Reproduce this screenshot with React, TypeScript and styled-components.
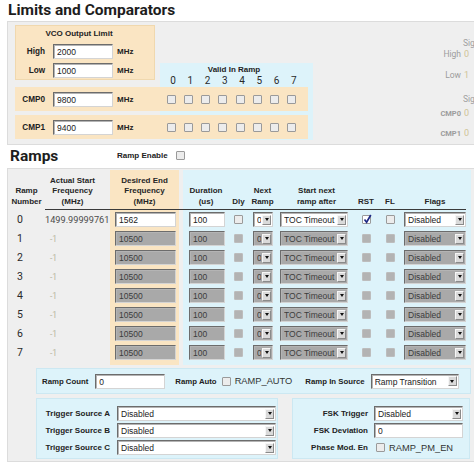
import React from "react";
import styled, { createGlobalStyle } from "styled-components";

type Tone = "tan" | "blue";

const TAN = "#fae5c3";
const BLUE = "#ddf3fa";
const PANEL = "#efefef";

const toneBg = (t?: Tone) => (t === "tan" ? TAN : t === "blue" ? BLUE : "transparent");

const GlobalStyle = createGlobalStyle`
  html, body {
    margin: 0;
    padding: 0;
    overflow: hidden;
    background: #ffffff;
  }
  body {
    font-family: "Liberation Sans", Arial, sans-serif;
    color: #222;
  }
  *, *::before, *::after {
    box-sizing: border-box;
  }
`;

const Page = styled.div`
  width: 474px;
  overflow: hidden;
`;

const SectionTitle = styled.h2<{ $w?: number; $left?: number }>`
  margin: 0;
  padding-left: ${p => p.$left ?? 8}px;
  width: ${p => (p.$w ? `${p.$w}px` : "auto")};
  font-family: Roboto, "Liberation Sans", sans-serif;
  font-weight: 700;
  font-size: 15.5px;
  line-height: 20px;
  color: #1d1d1d;
`;

const Panel = styled.div<{ $top: number }>`
  margin: ${p => p.$top}px 0 0 7px;
  background: ${PANEL};
  border: 1px solid #dcdcdc;
  border-right: none;
`;

const LimitsBody = styled.div`
  display: flex;
  align-items: flex-start;
  padding: 3px 0 4px 7px;
`;

const LeftColumn = styled.div`
  display: flex;
  flex-direction: column;
  width: 145px;
`;

const VcoBox = styled.div`
  width: 140px;
  background: ${TAN};
  border: 1px solid #f0d8ae;
  padding: 3px 0 1px;
  margin-bottom: 7px;
`;

const BoxTitle = styled.div<{ $shift?: number }>`
  font-size: 8px;
  line-height: 10px;
  font-weight: 700;
  text-align: center;
  padding-right: ${p => p.$shift ?? 0}px;
  color: #222;
`;

const FieldRow = styled.div<{ $top?: number }>`
  display: flex;
  align-items: center;
  height: 15px;
  margin-top: ${p => p.$top ?? 0}px;
`;

const FieldLabel = styled.span`
  width: 29px;
  margin-right: 8px;
  text-align: right;
  font-size: 8.2px;
  font-weight: 700;
  color: #222;
  white-space: nowrap;
`;

const Unit = styled.span`
  margin-left: 4px;
  font-size: 8px;
  font-weight: 700;
  color: #222;
`;

const Strip = styled.div<{ $top?: number }>`
  display: flex;
  align-items: center;
  height: 24px;
  margin-top: ${p => p.$top ?? 0}px;
  padding-left: 1px;
  background: ${TAN};
`;

const ValidBox = styled.div`
  margin-top: 38px;
  width: 153px;
  background: ${BLUE};
  padding: 2px 5px 1px 0;
`;

const RampGrid = styled.div<{ $top?: number; $shift?: number }>`
  display: grid;
  grid-template-columns: repeat(8, 17.25px);
  justify-items: center;
  align-items: center;
  margin-top: ${p => p.$top ?? 0}px;
  padding-left: ${p => 2.5 + (p.$shift ?? 0)}px;
`;

const DigitRow = styled(RampGrid)`
  height: 12px;
  font-family: Roboto, "Liberation Sans", sans-serif;
  font-size: 10px;
  line-height: 12px;
  color: #2a2a2a;
`;

const CheckStrip = styled(RampGrid)`
  height: 24px;
  background: ${TAN};
`;

const SigBlock = styled.div`
  margin: 13px 0 0 auto;
  width: 37px;
  display: flex;
  flex-direction: column;
  font-family: Roboto, "Liberation Sans", sans-serif;
`;

const SigHead = styled.div<{ $top?: number }>`
  margin-top: ${p => p.$top ?? 0}px;
  padding-left: 26px;
  font-size: 8.5px;
  line-height: 10px;
  color: #a0a0a0;
  white-space: nowrap;
`;

const SigRow = styled.div<{ $top?: number }>`
  display: flex;
  align-items: baseline;
  margin-top: ${p => p.$top ?? 0}px;
  line-height: 10px;
`;

const SigLabel = styled.span<{ $bold?: boolean }>`
  width: 24px;
  flex: none;
  text-align: right;
  font-size: ${p => (p.$bold ? 7.5 : 8.5)}px;
  font-weight: ${p => (p.$bold ? 700 : 400)};
  color: #9c9c9c;
  white-space: nowrap;
`;

const SigValue = styled.span`
  margin-left: 3px;
  font-size: 9px;
  color: #cfc497;
`;

/* ramps */

const RampsHeader = styled.div`
  display: flex;
  align-items: center;
  height: 21px;
`;

const InlineLabel = styled.span<{ $left?: number; $size?: number }>`
  margin-left: ${p => p.$left ?? 0}px;
  font-size: ${p => p.$size ?? 8}px;
  font-weight: 700;
  color: #222;
  white-space: nowrap;
`;

const RampsBody = styled.div`
  padding: 1px 0 2px 0;
`;

const RampTable = styled.table`
  border-collapse: separate;
  border-spacing: 0;
  table-layout: fixed;
  width: 463px;
`;

const Col = styled.col<{ $w: number }>`
  width: ${p => p.$w}px;
`;

const HeadRow = styled.tr`
  height: 40px;
`;

const BodyRow = styled.tr<{ $h?: number }>`
  height: ${p => p.$h ?? 19}px;
`;

const HeadCell = styled.th<{ $tone?: Tone; $line?: boolean; $padRight?: number }>`
  padding: 0 ${p => p.$padRight ?? 0}px 2px 0;
  vertical-align: bottom;
  text-align: center;
  font-size: 8px;
  line-height: 10.5px;
  font-weight: 700;
  color: #262626;
  background: ${p => toneBg(p.$tone)};
  border-bottom: 1px solid ${p => (p.$line ? "#3a3a3a" : "transparent")};
`;

const Cell = styled.td<{ $tone?: Tone }>`
  padding: 0;
  vertical-align: middle;
  background: ${p => toneBg(p.$tone)};
  white-space: nowrap;
`;

const RowNumber = styled.span`
  display: block;
  padding-left: 9px;
  font-family: Roboto, "Liberation Sans", sans-serif;
  font-size: 10.5px;
  color: #2a2a2a;
`;

const StartFreq = styled.span<{ $muted?: boolean }>`
  display: block;
  padding-left: ${p => (p.$muted ? 5 : 0)}px;
  font-family: Roboto, "Liberation Sans", sans-serif;
  font-size: ${p => (p.$muted ? 8.5 : 9.2)}px;
  color: ${p => (p.$muted ? "#b9b8a2" : "#4c4c4c")};
`;

const TextInput = styled.input<{ $w: number; $left?: number; $off?: boolean }>`
  display: block;
  width: ${p => p.$w}px;
  height: 15px;
  margin: 0 0 0 ${p => p.$left ?? 0}px;
  padding: 1px 3px 0;
  border: 1px solid;
  border-color: #6c6c6c #d4d4d4 #d4d4d4 #6c6c6c;
  box-shadow: inset 1px 1px 0 #b4b4b4;
  background: ${p => (p.$off ? "#a9a9a9" : "#ffffff")};
  color: ${p => (p.$off ? "#3c3c3c" : "#222")};
  font-family: "Liberation Sans", Arial, sans-serif;
  font-size: 8.5px;
  outline: none;
`;

const SelectBox = styled.div<{ $w: number; $left?: number; $off?: boolean }>`
  display: flex;
  align-items: center;
  width: ${p => p.$w}px;
  height: 15px;
  margin-left: ${p => p.$left ?? 0}px;
  padding: 0 1px 0 3px;
  border: 1px solid;
  border-color: #6c6c6c #d4d4d4 #d4d4d4 #6c6c6c;
  box-shadow: inset 1px 1px 0 #b4b4b4;
  background: ${p => (p.$off ? "#a9a9a9" : "#ffffff")};
  color: ${p => (p.$off ? "#3c3c3c" : "#222")};
  font-size: 8.5px;
`;

const SelectText = styled.span`
  flex: 1;
  overflow: hidden;
  white-space: nowrap;
  padding-top: 1px;
`;

const DropButton = styled.span`
  display: flex;
  align-items: center;
  justify-content: center;
  flex: none;
  width: 9px;
  height: 10px;
  margin-left: 1px;
  background: #dadada;
  border: 1px solid;
  border-color: #f6f6f6 #8a8a8a #8a8a8a #f6f6f6;
  &::after {
    content: "";
    border-left: 2.5px solid transparent;
    border-right: 2.5px solid transparent;
    border-top: 3px solid #111;
  }
`;

type CheckState = "off" | "on" | "disabled";

const CheckBox = styled.span<{ $state?: CheckState; $left?: number; $center?: boolean }>`
  display: block;
  flex: none;
  position: relative;
  width: 9px;
  height: 9px;
  margin: ${p => (p.$center ? "0 auto" : `0 0 0 ${p.$left ?? 0}px`)};
  border: 1px solid ${p => (p.$state === "disabled" ? "#bdbdbd" : "#9a9a9a")};
  border-radius: 1px;
  background: ${p =>
    p.$state === "disabled" ? "#b3b3b3" : p.$state === "on" ? "#ffffff" : "#ececec"};
  svg {
    position: absolute;
    left: 0;
    top: -2px;
  }
`;

const Check = ({ state = "off", left, center }: { state?: CheckState; left?: number; center?: boolean }) => (
  <CheckBox $state={state} $left={left} $center={center}>
    {state === "on" && (
      <svg width="9" height="10" viewBox="0 0 9 10">
        <path d="M1.5 5.5 L3.6 8.2 L7.8 1" fill="none" stroke="#1e2a86" strokeWidth="1.7" />
      </svg>
    )}
  </CheckBox>
);

const Select = ({ w, left, off, children }: { w: number; left?: number; off?: boolean; children: React.ReactNode }) => (
  <SelectBox $w={w} $left={left} $off={off}>
    <SelectText>{children}</SelectText>
    <DropButton />
  </SelectBox>
);

const BottomArea = styled.div`
  padding-left: 28px;
`;

const BlueBar = styled.div`
  display: flex;
  align-items: center;
  width: 435px;
  height: 26px;
  margin-top: 3px;
  padding-left: 5px;
  background: ${BLUE};
  border: 1px solid #cce8f2;
`;

const OptionText = styled.span`
  margin-left: 4px;
  font-size: 9.3px;
  color: #333;
  white-space: nowrap;
`;

const TriggerRow = styled.div`
  display: flex;
  gap: 14px;
  margin-top: 4px;
`;

const FormBox = styled.div<{ $w: number; $label: number; $gap: number }>`
  display: grid;
  grid-template-columns: ${p => p.$label}px auto;
  grid-auto-rows: 17px;
  align-items: center;
  align-content: start;
  column-gap: ${p => p.$gap}px;
  width: ${p => p.$w}px;
  height: 61px;
  padding-top: 6px;
  background: ${BLUE};
  border: 1px solid #cce8f2;
`;

const FormLabel = styled.span`
  text-align: right;
  font-size: 8px;
  font-weight: 700;
  color: #222;
  white-space: nowrap;
`;

const InlineField = styled.div`
  display: flex;
  align-items: center;
`;

const rows = Array.from({ length: 8 }, (_, i) => i);

export default function App() {
  return (
    <Page>
      <GlobalStyle />
      <SectionTitle>Limits and Comparators</SectionTitle>
      <Panel $top={1}>
        <LimitsBody>
          <LeftColumn>
            <VcoBox>
              <BoxTitle $shift={12}>VCO Output Limit</BoxTitle>
              <FieldRow $top={5}>
                <FieldLabel>High</FieldLabel>
                <TextInput $w={60} value="2000" readOnly />
                <Unit>MHz</Unit>
              </FieldRow>
              <FieldRow $top={4}>
                <FieldLabel>Low</FieldLabel>
                <TextInput $w={60} value="1000" readOnly />
                <Unit>MHz</Unit>
              </FieldRow>
            </VcoBox>
            <Strip>
              <FieldLabel>CMP0</FieldLabel>
              <TextInput $w={60} value="9800" readOnly />
              <Unit>MHz</Unit>
            </Strip>
            <Strip $top={4}>
              <FieldLabel>CMP1</FieldLabel>
              <TextInput $w={60} value="9400" readOnly />
              <Unit>MHz</Unit>
            </Strip>
          </LeftColumn>
          <ValidBox>
            <BoxTitle>Valid In Ramp</BoxTitle>
            <DigitRow $shift={2}>
              {rows.map(i => (
                <span key={i}>{i}</span>
              ))}
            </DigitRow>
            <CheckStrip>
              {rows.map(i => (
                <Check key={i} />
              ))}
            </CheckStrip>
            <CheckStrip $top={4}>
              {rows.map(i => (
                <Check key={i} />
              ))}
            </CheckStrip>
          </ValidBox>
          <SigBlock>
            <SigHead>Sig</SigHead>
            <SigRow $top={1}>
              <SigLabel>High</SigLabel>
              <SigValue>0</SigValue>
            </SigRow>
            <SigRow $top={11}>
              <SigLabel>Low</SigLabel>
              <SigValue>1</SigValue>
            </SigRow>
            <SigHead $top={14}>Sig</SigHead>
            <SigRow $top={4}>
              <SigLabel $bold>CMP0</SigLabel>
              <SigValue>0</SigValue>
            </SigRow>
            <SigRow $top={9}>
              <SigLabel $bold>CMP1</SigLabel>
              <SigValue>0</SigValue>
            </SigRow>
          </SigBlock>
        </LimitsBody>
      </Panel>

      <RampsHeader>
        <SectionTitle $w={117} $left={10}>
          Ramps
        </SectionTitle>
        <InlineLabel>Ramp Enable</InlineLabel>
        <Check left={8} />
      </RampsHeader>

      <Panel $top={2}>
        <RampsBody>
          <RampTable>
            <colgroup>
              <Col $w={37} />
              <Col $w={65} />
              <Col $w={69} />
              <Col $w={4} />
              <Col $w={46} />
              <Col $w={19} />
              <Col $w={29} />
              <Col $w={79} />
              <Col $w={20} />
              <Col $w={28} />
              <Col $w={62} />
              <Col $w={5} />
            </colgroup>
            <thead>
              <HeadRow>
                <HeadCell>
                  Ramp
                  <br />
                  Number
                </HeadCell>
                <HeadCell $line $padRight={10}>
                  Actual Start
                  <br />
                  Frequency
                  <br />
                  (MHz)
                </HeadCell>
                <HeadCell $line $tone="tan">
                  Desired End
                  <br />
                  Frequency
                  <br />
                  (MHz)
                </HeadCell>
                <HeadCell $line />
                <HeadCell $line $tone="blue">
                  Duration
                  <br />
                  (us)
                </HeadCell>
                <HeadCell $line $tone="blue">
                  Dly
                </HeadCell>
                <HeadCell $line $tone="blue">
                  Next
                  <br />
                  Ramp
                </HeadCell>
                <HeadCell $line $tone="blue">
                  Start next
                  <br />
                  ramp after
                </HeadCell>
                <HeadCell $line $tone="blue">
                  RST
                </HeadCell>
                <HeadCell $line $tone="blue">
                  FL
                </HeadCell>
                <HeadCell $line $tone="blue">
                  Flags
                </HeadCell>
                <HeadCell $tone="blue" />
              </HeadRow>
            </thead>
            <tbody>
              {rows.map(i => {
                const off = i > 0;
                return (
                  <BodyRow key={i}>
                    <Cell>
                      <RowNumber>{i}</RowNumber>
                    </Cell>
                    <Cell>
                      <StartFreq $muted={off}>{off ? "-1" : "1499.99999761"}</StartFreq>
                    </Cell>
                    <Cell $tone="tan">
                      <TextInput $w={61} $left={5} $off={off} value={off ? "10500" : "1562"} readOnly />
                    </Cell>
                    <Cell />
                    <Cell $tone="blue">
                      <TextInput $w={36} $left={6} $off={off} value="100" readOnly />
                    </Cell>
                    <Cell $tone="blue">
                      <Check center state={off ? "disabled" : "off"} />
                    </Cell>
                    <Cell $tone="blue">
                      <Select w={20} left={5} off={off}>
                        0
                      </Select>
                    </Cell>
                    <Cell $tone="blue">
                      <Select w={68} left={3} off={off}>
                        TOC Timeout
                      </Select>
                    </Cell>
                    <Cell $tone="blue">
                      <Check center state={off ? "disabled" : "on"} />
                    </Cell>
                    <Cell $tone="blue">
                      <Check center state={off ? "disabled" : "off"} />
                    </Cell>
                    <Cell $tone="blue">
                      <Select w={62} off={off}>
                        Disabled
                      </Select>
                    </Cell>
                    <Cell $tone="blue" />
                  </BodyRow>
                );
              })}
              <BodyRow $h={3}>
                <Cell />
                <Cell />
                <Cell $tone="tan" />
                <Cell />
                <Cell $tone="blue" colSpan={8} />
              </BodyRow>
            </tbody>
          </RampTable>

          <BottomArea>
            <BlueBar>
              <InlineLabel $size={7.8}>Ramp Count</InlineLabel>
              <TextInput $w={70} $left={7} value="0" readOnly />
              <InlineLabel $size={7.8} $left={10}>
                Ramp Auto
              </InlineLabel>
              <Check left={5} />
              <OptionText>RAMP_AUTO</OptionText>
              <InlineLabel $size={7.8} $left={13}>
                Ramp In Source
              </InlineLabel>
              <Select w={88} left={6}>
                Ramp Transition
              </Select>
            </BlueBar>
            <TriggerRow>
              <FormBox $w={242} $label={73} $gap={7}>
                <FormLabel>Trigger Source A</FormLabel>
                <Select w={159}>Disabled</Select>
                <FormLabel>Trigger Source B</FormLabel>
                <Select w={159}>Disabled</Select>
                <FormLabel>Trigger Source C</FormLabel>
                <Select w={159}>Disabled</Select>
              </FormBox>
              <FormBox $w={178} $label={75} $gap={6}>
                <FormLabel>FSK Trigger</FormLabel>
                <Select w={89}>Disabled</Select>
                <FormLabel>FSK Deviation</FormLabel>
                <TextInput $w={89} value="0" readOnly />
                <FormLabel>Phase Mod. En</FormLabel>
                <InlineField>
                  <Check left={2} />
                  <OptionText>RAMP_PM_EN</OptionText>
                </InlineField>
              </FormBox>
            </TriggerRow>
          </BottomArea>
        </RampsBody>
      </Panel>
    </Page>
  );
}
